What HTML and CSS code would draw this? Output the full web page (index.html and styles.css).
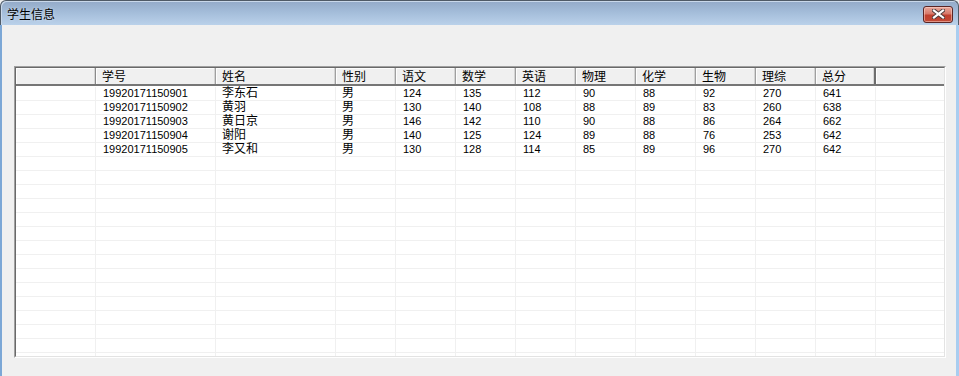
FILE: index.html
```html
<!DOCTYPE html>
<html lang="zh-CN">
<head>
<meta charset="utf-8">
<title>学生信息</title>
<link rel="stylesheet" href="styles.css">
</head>
<body>
<div class="window">
  <div class="titlebar">
    <span class="title">学生信息</span>
    <div class="close-btn">
      <svg width="13" height="10" viewBox="0 0 13 10">
        <path d="M2 1.5 L11 8.5 M11 1.5 L2 8.5" stroke="#4a3a3a" stroke-width="4" stroke-linecap="square" fill="none"/>
        <path d="M2 1.5 L11 8.5 M11 1.5 L2 8.5" stroke="#ffffff" stroke-width="2.2" stroke-linecap="square" fill="none"/>
      </svg>
    </div>
  </div>
  <div class="client">
    <div class="grid">
      <div class="grid-inner">
        <div class="row head">
          <div class="cell"></div>
          <div class="cell">学号</div>
          <div class="cell">姓名</div>
          <div class="cell">性别</div>
          <div class="cell">语文</div>
          <div class="cell">数学</div>
          <div class="cell">英语</div>
          <div class="cell">物理</div>
          <div class="cell">化学</div>
          <div class="cell">生物</div>
          <div class="cell">理综</div>
          <div class="cell">总分</div>
          <div class="cell last"></div>
        </div>
        <div class="body">
          <div class="row"><div class="cell"></div><div class="cell">19920171150901</div><div class="cell cjk">李东石</div><div class="cell cjk">男</div><div class="cell">124</div><div class="cell">135</div><div class="cell">112</div><div class="cell">90</div><div class="cell">88</div><div class="cell">92</div><div class="cell">270</div><div class="cell">641</div><div class="cell"></div></div>
          <div class="row"><div class="cell"></div><div class="cell">19920171150902</div><div class="cell cjk">黄羽</div><div class="cell cjk">男</div><div class="cell">130</div><div class="cell">140</div><div class="cell">108</div><div class="cell">88</div><div class="cell">89</div><div class="cell">83</div><div class="cell">260</div><div class="cell">638</div><div class="cell"></div></div>
          <div class="row"><div class="cell"></div><div class="cell">19920171150903</div><div class="cell cjk">黄日京</div><div class="cell cjk">男</div><div class="cell">146</div><div class="cell">142</div><div class="cell">110</div><div class="cell">90</div><div class="cell">88</div><div class="cell">86</div><div class="cell">264</div><div class="cell">662</div><div class="cell"></div></div>
          <div class="row"><div class="cell"></div><div class="cell">19920171150904</div><div class="cell cjk">谢阳</div><div class="cell cjk">男</div><div class="cell">140</div><div class="cell">125</div><div class="cell">124</div><div class="cell">89</div><div class="cell">88</div><div class="cell">76</div><div class="cell">253</div><div class="cell">642</div><div class="cell"></div></div>
          <div class="row"><div class="cell"></div><div class="cell">19920171150905</div><div class="cell cjk">李又和</div><div class="cell cjk">男</div><div class="cell">130</div><div class="cell">128</div><div class="cell">114</div><div class="cell">85</div><div class="cell">89</div><div class="cell">96</div><div class="cell">270</div><div class="cell">642</div><div class="cell"></div></div>
          <div class="row"><div class="cell"></div><div class="cell"></div><div class="cell"></div><div class="cell"></div><div class="cell"></div><div class="cell"></div><div class="cell"></div><div class="cell"></div><div class="cell"></div><div class="cell"></div><div class="cell"></div><div class="cell"></div><div class="cell"></div></div>
          <div class="row"><div class="cell"></div><div class="cell"></div><div class="cell"></div><div class="cell"></div><div class="cell"></div><div class="cell"></div><div class="cell"></div><div class="cell"></div><div class="cell"></div><div class="cell"></div><div class="cell"></div><div class="cell"></div><div class="cell"></div></div>
          <div class="row"><div class="cell"></div><div class="cell"></div><div class="cell"></div><div class="cell"></div><div class="cell"></div><div class="cell"></div><div class="cell"></div><div class="cell"></div><div class="cell"></div><div class="cell"></div><div class="cell"></div><div class="cell"></div><div class="cell"></div></div>
          <div class="row"><div class="cell"></div><div class="cell"></div><div class="cell"></div><div class="cell"></div><div class="cell"></div><div class="cell"></div><div class="cell"></div><div class="cell"></div><div class="cell"></div><div class="cell"></div><div class="cell"></div><div class="cell"></div><div class="cell"></div></div>
          <div class="row"><div class="cell"></div><div class="cell"></div><div class="cell"></div><div class="cell"></div><div class="cell"></div><div class="cell"></div><div class="cell"></div><div class="cell"></div><div class="cell"></div><div class="cell"></div><div class="cell"></div><div class="cell"></div><div class="cell"></div></div>
          <div class="row"><div class="cell"></div><div class="cell"></div><div class="cell"></div><div class="cell"></div><div class="cell"></div><div class="cell"></div><div class="cell"></div><div class="cell"></div><div class="cell"></div><div class="cell"></div><div class="cell"></div><div class="cell"></div><div class="cell"></div></div>
          <div class="row"><div class="cell"></div><div class="cell"></div><div class="cell"></div><div class="cell"></div><div class="cell"></div><div class="cell"></div><div class="cell"></div><div class="cell"></div><div class="cell"></div><div class="cell"></div><div class="cell"></div><div class="cell"></div><div class="cell"></div></div>
          <div class="row"><div class="cell"></div><div class="cell"></div><div class="cell"></div><div class="cell"></div><div class="cell"></div><div class="cell"></div><div class="cell"></div><div class="cell"></div><div class="cell"></div><div class="cell"></div><div class="cell"></div><div class="cell"></div><div class="cell"></div></div>
          <div class="row"><div class="cell"></div><div class="cell"></div><div class="cell"></div><div class="cell"></div><div class="cell"></div><div class="cell"></div><div class="cell"></div><div class="cell"></div><div class="cell"></div><div class="cell"></div><div class="cell"></div><div class="cell"></div><div class="cell"></div></div>
          <div class="row"><div class="cell"></div><div class="cell"></div><div class="cell"></div><div class="cell"></div><div class="cell"></div><div class="cell"></div><div class="cell"></div><div class="cell"></div><div class="cell"></div><div class="cell"></div><div class="cell"></div><div class="cell"></div><div class="cell"></div></div>
          <div class="row"><div class="cell"></div><div class="cell"></div><div class="cell"></div><div class="cell"></div><div class="cell"></div><div class="cell"></div><div class="cell"></div><div class="cell"></div><div class="cell"></div><div class="cell"></div><div class="cell"></div><div class="cell"></div><div class="cell"></div></div>
          <div class="row"><div class="cell"></div><div class="cell"></div><div class="cell"></div><div class="cell"></div><div class="cell"></div><div class="cell"></div><div class="cell"></div><div class="cell"></div><div class="cell"></div><div class="cell"></div><div class="cell"></div><div class="cell"></div><div class="cell"></div></div>
          <div class="row"><div class="cell"></div><div class="cell"></div><div class="cell"></div><div class="cell"></div><div class="cell"></div><div class="cell"></div><div class="cell"></div><div class="cell"></div><div class="cell"></div><div class="cell"></div><div class="cell"></div><div class="cell"></div><div class="cell"></div></div>
          <div class="row"><div class="cell"></div><div class="cell"></div><div class="cell"></div><div class="cell"></div><div class="cell"></div><div class="cell"></div><div class="cell"></div><div class="cell"></div><div class="cell"></div><div class="cell"></div><div class="cell"></div><div class="cell"></div><div class="cell"></div></div>
          <div class="row"><div class="cell"></div><div class="cell"></div><div class="cell"></div><div class="cell"></div><div class="cell"></div><div class="cell"></div><div class="cell"></div><div class="cell"></div><div class="cell"></div><div class="cell"></div><div class="cell"></div><div class="cell"></div><div class="cell"></div></div>
        </div>
      </div>
    </div>
  </div>
</div>
</body>
</html>
```
FILE: styles.css
```css
* { box-sizing: border-box; }

html, body {
  margin: 0;
  padding: 0;
}

body {
  width: 959px;
  height: 376px;
  overflow: hidden;
  background: #f0f0f0;
  font-family: "Liberation Sans", "Noto Sans CJK SC", sans-serif;
  color: #000;
}

.window {
  width: 959px;
  height: 376px;
  display: flex;
  flex-direction: column;
}

.titlebar {
  height: 25px;
  flex: none;
  display: flex;
  align-items: center;
  justify-content: space-between;
  padding: 0 5px 0 6px;
  border: 1px solid #4f5a66;
  border-bottom: none;
  border-radius: 6px 6px 0 0;
  background: linear-gradient(to bottom, #93aac8 0%, #a3bcd9 45%, #bad1ea 100%);
  box-shadow: inset 1px 1px 0 #c9d8ea;
}

.title {
  font-family: "Noto Sans CJK SC", sans-serif;
  font-size: 12px;
  line-height: 14px;
  color: #000;
  margin-top: 1px;
  text-shadow: 0 0 3px rgba(255,255,255,0.6);
}

.close-btn {
  width: 30px;
  height: 17px;
  margin-top: 2px;
  border: 1px solid #5a2525;
  border-radius: 3px;
  background: linear-gradient(to bottom, #e9a89c 0%, #d7796a 45%, #c0402f 55%, #c24a36 100%);
  box-shadow: inset 0 0 0 1px rgba(255,220,210,0.5);
  display: flex;
  align-items: center;
  justify-content: center;
}

.close-btn svg { display: block; }

.client {
  flex: 1;
  background: #f0f0f0;
  border-left: 2px solid #7ca7d6;
  border-right: 3px solid #a9cdf0;
  padding: 41px 0 0 12px;
}

.grid {
  width: 932px;
  height: 292px;
  border: 1px solid;
  border-color: #a0a0a0 #ffffff #ffffff #a0a0a0;
}

.grid-inner {
  width: 100%;
  height: 100%;
  border: 1px solid;
  border-color: #696969 #e3e3e3 #e3e3e3 #696969;
  background: #fff;
  overflow: hidden;
}

.row {
  display: grid;
  grid-template-columns: 80px 120px 120px repeat(9, 60px) 1fr;
}

.head {
  height: 18px;
  background: #f0f0f0;
  border-bottom: 2px solid #767676;
}

.head .cell {
  height: 16px;
  font-family: "Noto Sans CJK SC", sans-serif;
  font-size: 12px;
  line-height: 16px;
  padding-left: 6px;
  border-right: 1px solid #a0a0a0;
  box-shadow: inset -1px 0 0 #d4d4d4, inset 1px 1px 0 #fdfdfd;
  white-space: nowrap;
}

.head .cell:nth-child(1) { border-right-color: #8a8a8a; }
.head .cell:nth-child(12) { border-right: 2px solid #6d6d6d; }
.head .cell.last { border-right: none; box-shadow: inset 1px 1px 0 #fdfdfd; }

.body {
  padding-top: 1px;
}

.body .cell {
  height: 14px;
  border-right: 1px solid #f0f0f0;
  border-bottom: 1px solid #f0f0f0;
  padding-left: 7px;
  font-size: 11px;
  line-height: 13px;
  white-space: nowrap;
  overflow: visible;
}

.body .cell.cjk {
  padding-left: 6px;
  font-family: "Liberation Sans", "Noto Sans CJK SC", sans-serif;
  font-size: 12px;
  line-height: 13px;
}

.body .cell:last-child { border-right: none; }
```
